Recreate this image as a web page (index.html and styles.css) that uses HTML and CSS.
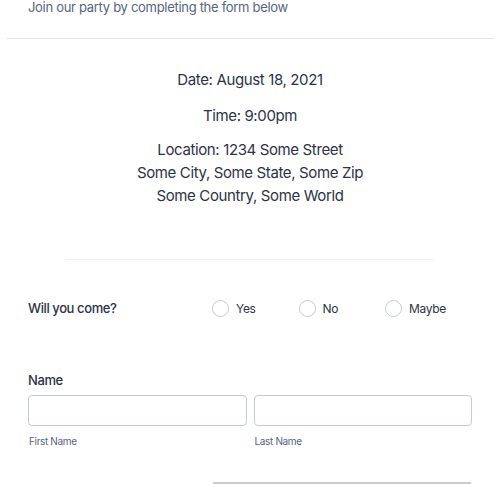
FILE: index.html
```html
<!DOCTYPE html>
<html>
<head>
<meta charset="utf-8">
<link rel="stylesheet" href="styles.css">
</head>
<body>
<div class="page">
  <p class="subtitle">Join our party by completing the form below</p>
  <hr class="rule-top">
  <div class="info">
    <p class="info-line">Date: August 18, 2021</p>
    <p class="info-line">Time: 9:00pm</p>
    <p class="info-line address">Location: 1234 Some Street<br>Some City, Some State, Some Zip<br>Some Country, Some World</p>
  </div>
  <hr class="rule-mid">
  <div class="question">
    <span class="q-label">Will you come?</span>
    <div class="options">
      <label class="option"><span class="radio"></span>Yes</label>
      <label class="option"><span class="radio"></span>No</label>
      <label class="option"><span class="radio"></span>Maybe</label>
    </div>
  </div>
  <div class="name-field">
    <div class="q-label name-label">Name</div>
    <div class="name-row">
      <div class="name-col">
        <div class="input"></div>
        <div class="sublabel">First Name</div>
      </div>
      <div class="name-col">
        <div class="input"></div>
        <div class="sublabel">Last Name</div>
      </div>
    </div>
  </div>
  <div class="bottom-line"></div>
</div>
</body>
</html>
```
FILE: styles.css
```css
html, body {
  margin: 0;
  padding: 0;
  background: #fff;
}
body {
  font-family: Inter, "Noto Sans", sans-serif;
  color: #2c3345;
  overflow: hidden;
}
.page {
  width: 500px;
  height: 484px;
  overflow: hidden;
}
.subtitle {
  margin: 0 0 0 28px;
  font-size: 13px;
  letter-spacing: -0.3px;
  line-height: 14px;
  color: #57647e;
}
.rule-top {
  margin: 24px 6px 0 6px;
  border: 0;
  border-top: 1px solid #e3e5ea;
  height: 0;
}
.info {
  text-align: center;
  font-size: 15px;
  letter-spacing: -0.37px;
  color: #2c3345;
  padding-top: 29px;
}
.info-line {
  margin: 0 0 13px 0;
  line-height: 23px;
}
.info-line:nth-child(2) {
  margin-bottom: 11px;
}
.address {
  margin-bottom: 0;
}
.rule-mid {
  margin: 52px 67px 0 66px;
  border: 0;
  border-top: 1px solid #eceef2;
  height: 0;
}
.question {
  display: flex;
  align-items: center;
  padding: 0 28px;
  margin-top: 38px;
  height: 20px;
}
.q-label {
  font-size: 13px;
  letter-spacing: -0.4px;
  font-weight: 500;
  color: #2c3345;
}
.question .q-label {
  width: 184px;
}
.options {
  display: flex;
}
.option {
  display: flex;
  align-items: center;
  font-size: 12px;
  letter-spacing: -0.3px;
  color: #2c3345;
  width: 86.5px;
}
.radio {
  width: 15px;
  height: 15px;
  border: 1px solid #c3cad8;
  border-radius: 50%;
  margin-right: 7px;
  box-sizing: content-box;
}
.name-field {
  padding: 0 28px;
  margin-top: 53px;
}
.name-label {
  line-height: 18px;
}
.name-row {
  display: flex;
  gap: 7px;
  margin-top: 6px;
  width: 444px;
}
.name-col {
  flex: 1;
}
.input {
  height: 29px;
  border: 1px solid #c3cad8;
  border-radius: 4px;
}
.sublabel {
  font-size: 10px;
  letter-spacing: -0.35px;
  color: #57647e;
  margin-top: 8px;
  line-height: 14px;
  padding-left: 1px;
}
.bottom-line {
  margin: 34px 0 0 213px;
  width: 258px;
  height: 2px;
  background: #c8ccd4;
}
```
